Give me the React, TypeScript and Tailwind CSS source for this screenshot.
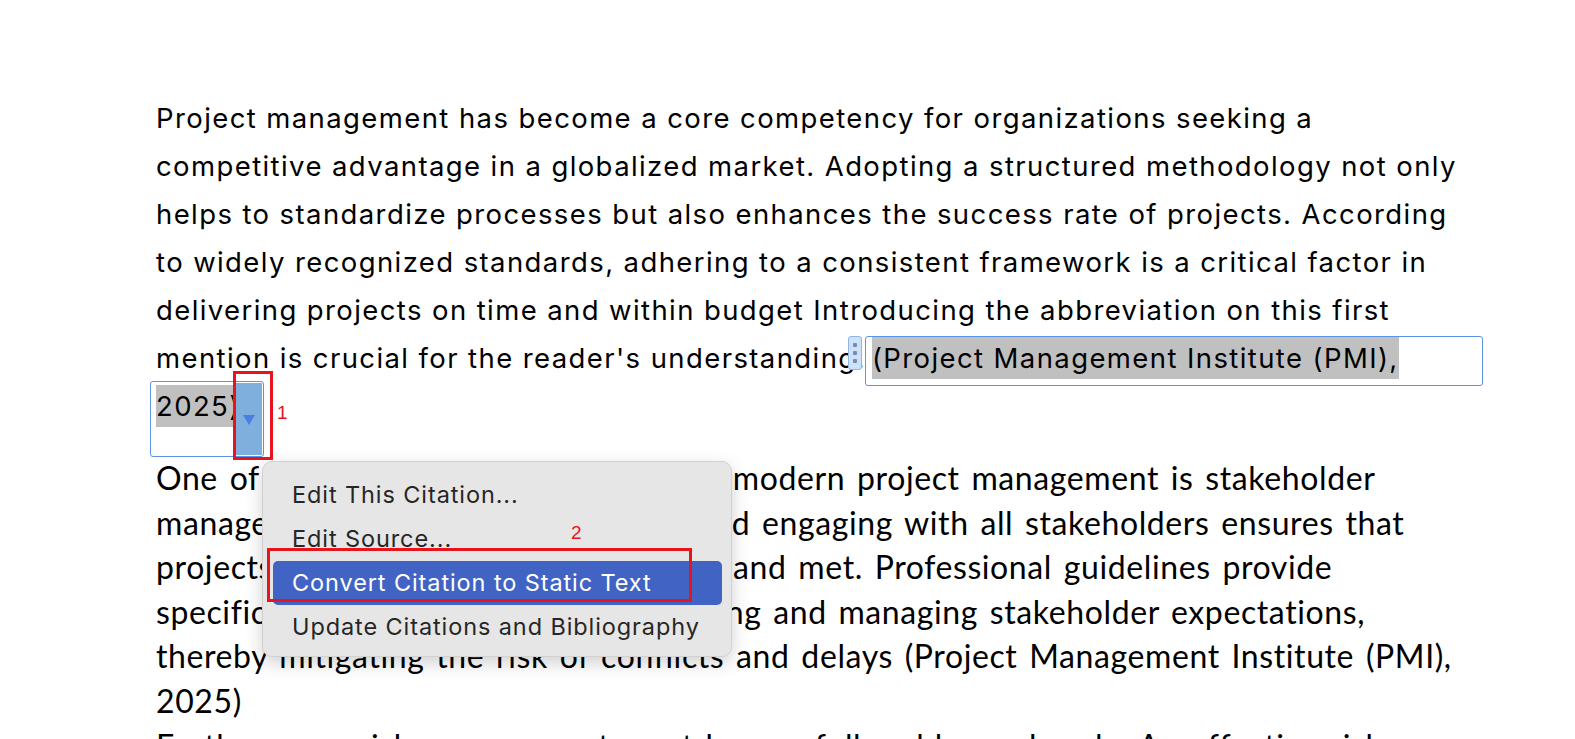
import React from 'react';

const para1 = [
  'Project management has become a core competency for organizations seeking a',
  'competitive advantage in a globalized market. Adopting a structured methodology not only',
  'helps to standardize processes but also enhances the success rate of projects. According',
  'to widely recognized standards, adhering to a consistent framework is a critical factor in',
  'delivering projects on time and within budget Introducing the abbreviation on this first',
];

const para2 = [
  'One of the most important aspects of modern project management is stakeholder',
  'management. Effectively identifying and engaging with all stakeholders ensures that',
  "projects' requirements are understood and met. Professional guidelines provide",
  'specific recommendations for prioritizing and managing stakeholder expectations,',
  'thereby mitigating the risk of conflicts and delays (Project Management Institute (PMI),',
  '2025)',
  'Furthermore, risk management must be carefully addressed early. An effective risk',
];

const menuItems = [
  'Edit This Citation...',
  'Edit Source...',
  'Convert Citation to Static Text',
  'Update Citations and Bibliography',
];

const Handle = () => (
  <span className="absolute left-[848px] top-[336px] w-[14px] h-[34px] rounded-[3px] bg-[#cfe1f7] border border-[#8fb6ea] flex flex-col items-center justify-center gap-[4px]">
    <span className="w-[4px] h-[4px] bg-[#6f8fb8] rounded-[1px]" />
    <span className="w-[4px] h-[4px] bg-[#6f8fb8] rounded-[1px]" />
    <span className="w-[4px] h-[4px] bg-[#6f8fb8] rounded-[1px]" />
  </span>
);

const CitationMenu = () => (
  <div className="absolute left-[262px] top-[461px] w-[470px] h-[196px] rounded-[10px] bg-[#e7e6e6] border border-[#d2d1d1] shadow-[0_6px_18px_rgba(0,0,0,0.18)] pt-[11px] px-[10px] font-['Inter',sans-serif] text-[23.5px] tracking-[0.9px] text-[#262626]">
    {menuItems.map((item, i) => (
      <div
        key={item}
        className={
          'h-[44px] flex items-center pl-[19px] rounded-[5px] ' +
          (i === 2 ? 'bg-[#4164c4] text-white mr-[-1px]' : '')
        }
      >
        {item}
      </div>
    ))}
  </div>
);

export default function App() {
  return (
    <div className="relative w-[1575px] h-[739px] overflow-hidden bg-white">
      <div className="pl-[156px] pt-[94px]">
        <div className="font-['Inter',sans-serif] text-[27.5px] leading-[48px] tracking-[1.4px] text-black">
          {para1.map((line) => (
            <div key={line} className="whitespace-nowrap">{line}</div>
          ))}
          <div className="whitespace-nowrap">
            mention is crucial for the reader's understanding.
            <span className="inline-block w-[6px]" />
            <span className="bg-[#c0c0c0] py-[4px]">(Project Management Institute (PMI),</span>
          </div>
          <div className="whitespace-nowrap">
            <span className="bg-[#c0c0c0] py-[4px]">2025)</span>
          </div>
        </div>

        <div className="mt-[26px] font-['Lato',sans-serif] text-[32px] leading-[44.6px] tracking-[0.6px] [word-spacing:3px] text-black">
          {para2.map((line) => (
            <div key={line} className="whitespace-nowrap">{line}</div>
          ))}
        </div>
      </div>

      {/* citation field outlines */}
      <div className="absolute left-[865px] top-[336px] w-[618px] h-[50px] border-[1.5px] border-[#5b93e8] rounded-[3px]" />
      <div className="absolute left-[150px] top-[381px] w-[114px] h-[76px] border-[1.5px] border-[#5b93e8] rounded-[3px]" />
      <Handle />
      <div className="absolute left-[235px] top-[383px] w-[27px] h-[72px] bg-[#7fb0dd] flex items-center justify-center">
        <svg width="12" height="10" viewBox="0 0 12 10" className="mt-[2px]">
          <path d="M0 0 H12 L6 10 Z" fill="#4a7fe0" />
        </svg>
      </div>

      <CitationMenu />

      {/* annotations */}
      <div className="absolute left-[233px] top-[371px] w-[40px] h-[89px] border-[3px] border-[#e8141c]" />
      <div className="absolute left-[277px] top-[399px] font-['Liberation_Sans',sans-serif] text-[19px] text-[#e8141c]">1</div>
      <div className="absolute left-[267px] top-[548px] w-[425px] h-[54px] border-[3px] border-[#e8141c]" />
      <div className="absolute left-[571px] top-[519px] font-['Liberation_Sans',sans-serif] text-[19px] text-[#e8141c]">2</div>
    </div>
  );
}
